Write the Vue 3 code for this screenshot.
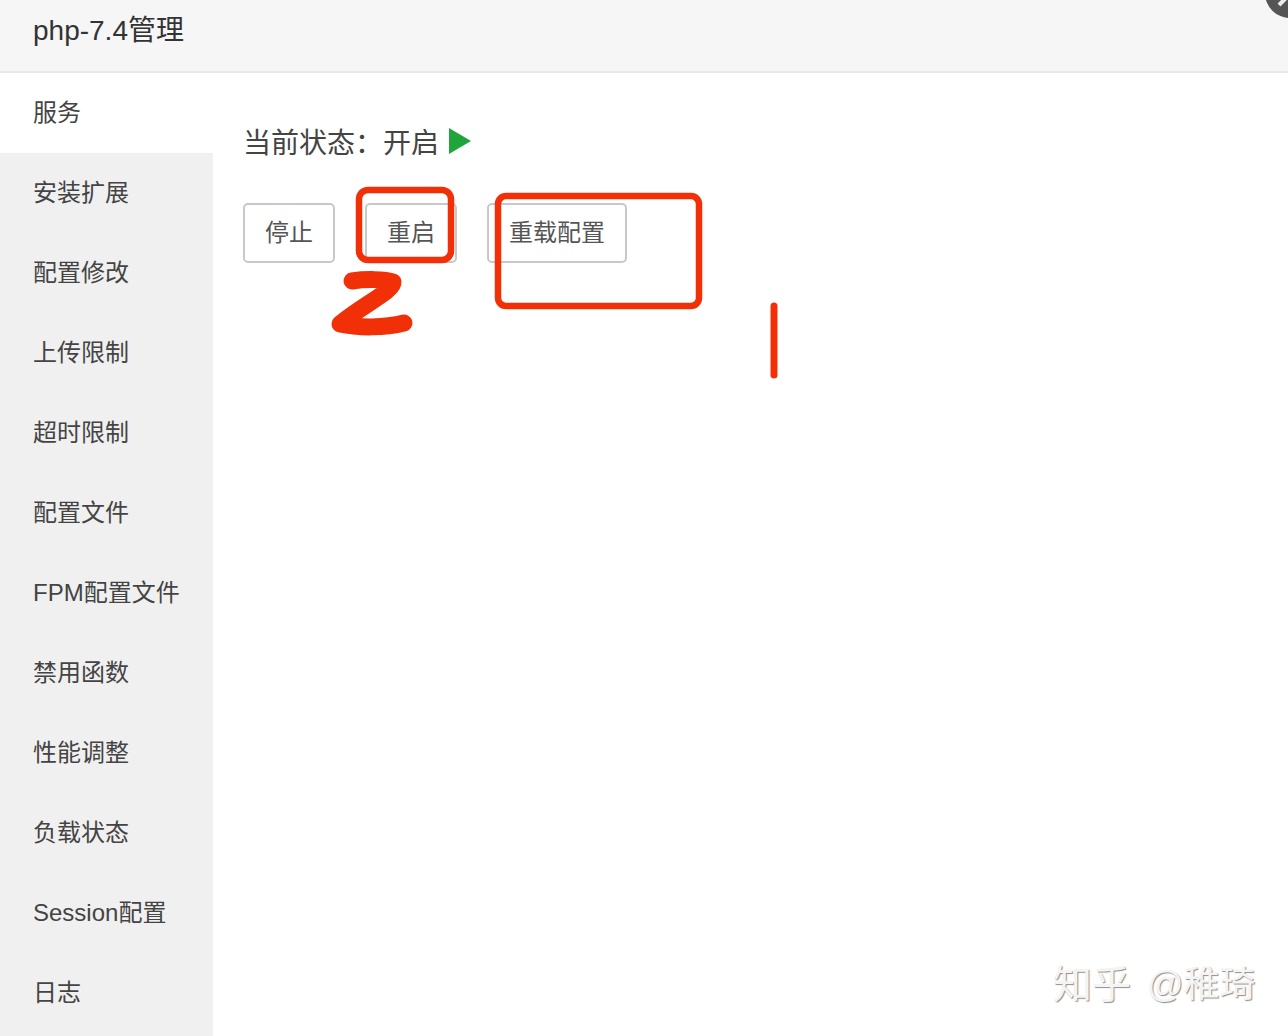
<script setup>
const menu = ['服务','安装扩展','配置修改','上传限制','超时限制','配置文件','FPM配置文件','禁用函数','性能调整','负载状态','Session配置','日志']
const buttons = ['停止','重启','重载配置']
</script>

<template>
  <div class="page">
    <header class="head">php-7.4管理</header>
    <div class="body">
      <nav class="side">
        <div v-for="(m, i) in menu" :key="m" class="item" :class="{ active: i === 0 }">{{ m }}</div>
      </nav>
      <main class="main">
        <div class="status">
          <span class="label">当前状态：</span><span>开启</span>
          <svg class="play" width="22" height="26" viewBox="0 0 22 26"><path d="M0 0 L22 13 L0 26 Z" fill="#20a53a"/></svg>
        </div>
        <div class="btns">
          <button v-for="b in buttons" :key="b" class="btn">{{ b }}</button>
        </div>
      </main>
    </div>
    <svg class="close" width="30" height="24" viewBox="0 0 30 24">
      <circle cx="32" cy="-7" r="25" fill="#555"/>
      <path d="M21 5 L32 -6" stroke="#eee" stroke-width="4"/>
    </svg>
    <svg class="marks" width="1288" height="1036" viewBox="0 0 1288 1036" fill="none" stroke="#f23008">
      <rect x="359" y="190" width="92" height="70" rx="9" stroke-width="6.5"/>
      <rect x="498" y="196" width="201" height="110" rx="8" stroke-width="6.5"/>
      <path d="M774 306 V375" stroke-width="7" stroke-linecap="round"/>
      <path d="M352 281 C365 279 385 279 393 282 C394 291 362 305 340 324 C358 328 385 328 404 323" stroke-width="17" stroke-linecap="round" stroke-linejoin="round"/>
    </svg>
    <div class="mark"><span class="brand">知乎</span><span class="author">@稚琦</span></div>
  </div>
</template>

<style scoped>
.page {
  position: relative;
  display: flex;
  flex-direction: column;
  width: 1288px;
  height: 1036px;
  overflow: hidden;
  background: #fff;
  color: #444;
  font-family: "Liberation Sans", "Noto Sans CJK SC", sans-serif;
}
.head {
  box-sizing: border-box;
  flex: none;
  height: 73px;
  padding: 13px 0 0 33px;
  background: #f6f6f6;
  border-bottom: 2px solid #e8e8e8;
  font-size: 28px;
  line-height: 36px;
  color: #333;
}
.body { display: flex; flex: 1; }
.side { width: 213px; background: #f0f0f0; }
.item {
  box-sizing: border-box;
  height: 80px;
  padding-left: 33px;
  font-size: 24px;
  line-height: 80px;
  color: #444;
}
.item.active { background: #fff; }
.main { flex: 1; padding: 48px 0 0 30px; }
.status {
  display: flex;
  align-items: center;
  height: 40px;
  font-size: 28px;
  color: #444;
}
.label { width: 140px; }
.play { margin-left: 10px; }
.btns { display: flex; gap: 30px; margin-top: 42px; }
.btn {
  box-sizing: border-box;
  height: 60px;
  padding: 0 20px 5px;
  border: 2px solid #c8c8c8;
  border-radius: 5px;
  background: #fff;
  font-family: inherit;
  font-size: 24px;
  color: #555;
}
.close { position: absolute; top: 0; right: 0; }
.marks { position: absolute; inset: 0; }
.mark {
  position: absolute;
  left: 1053px;
  top: 961px;
  display: flex;
  align-items: center;
  gap: 16px;
  line-height: 48px;
  white-space: nowrap;
  color: #f4f4f4;
  text-shadow: 1px 1px 1px #8e8e8e;
}
.brand { font-size: 39px; }
.author { font-size: 36px; }
</style>
